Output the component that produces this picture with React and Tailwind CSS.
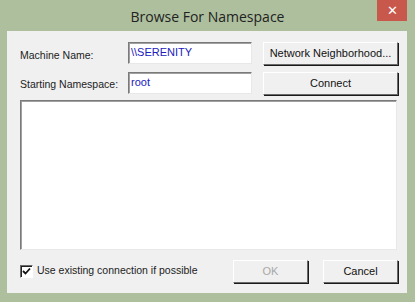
import React from 'react';

const raised =
  'border border-t-white border-l-white border-r-[#6a6a6a] border-b-[#6a6a6a] shadow-[1px_1px_0_#1a1a1a]';
const sunken =
  'border border-t-[#7a7a7a] border-l-[#7a7a7a] border-r-[#e8e8e8] border-b-[#e8e8e8] shadow-[inset_1px_1px_0_#a0a0a0]';

const Button = ({ children, disabled, className = '' }) => (
  <button
    disabled={disabled}
    className={`h-[23px] bg-[#f0f0f0] text-[11px] ${raised} ${
      disabled ? 'text-[#a8a8a8]' : 'text-[#111]'
    } ${className}`}
  >
    {children}
  </button>
);

const Field = ({ value }) => (
  <div
    className={`w-[124px] h-[22px] bg-white px-[2px] text-[11px] leading-[18px] text-[#2020c0] ${sunken}`}
  >
    {value}
  </div>
);

export default function App() {
  return (
    <div
      className="w-[415px] h-[302px] bg-[#adbf9d] flex flex-col"
      style={{ fontFamily: '"Liberation Sans", Arial, sans-serif' }}
    >
      <div className="relative h-[31px] flex items-center justify-center">
        <span className="text-[14px] text-[#222] pt-[1px]" style={{ fontFamily: '"Open Sans", "Noto Sans", sans-serif' }}>
          Browse For Namespace
        </span>
        <div className="absolute top-0 right-[8px] w-[30px] h-[21px] bg-[#c9584c] flex items-center justify-center text-white text-[13px] leading-none">
          ✕
        </div>
      </div>

      <div className="ml-[7px] mr-[8px] h-[262px] bg-[#f0f0f0] pl-[13px] pr-[9px] pt-[11px] flex flex-col">
        <div className="flex items-start h-[23px]">
          <span className="w-[108px] text-[10.5px] text-[#222] leading-[22px] pt-[2px]">Machine Name:</span>
          <Field value="\\SERENITY" />
          <Button className="ml-[11px] w-[135px]">Network Neighborhood...</Button>
        </div>
        <div className="flex items-start h-[23px] mt-[7px]">
          <span className="w-[108px] text-[10.5px] text-[#222] leading-[22px] pt-[1px]">Starting Namespace:</span>
          <Field value="root" />
          <Button className="ml-[11px] w-[135px]">Connect</Button>
        </div>

        <div className={`mt-[5px] mr-[1px] h-[150px] bg-white ${sunken}`} />

        <div className="flex items-center mt-[10px] h-[22px]">
          <div className="w-[13px] h-[13px] bg-white border border-t-[#6a6a6a] border-l-[#6a6a6a] border-r-white border-b-white shadow-[inset_1px_1px_0_#222] flex items-center justify-center">
            <svg width="9" height="9" viewBox="0 0 9 9">
              <path d="M1 4 L3.5 6.5 L8 1.5" fill="none" stroke="#111" strokeWidth="1.8" />
            </svg>
          </div>
          <span className="ml-[4px] text-[10.5px] text-[#222]">Use existing connection if possible</span>
          <div className="flex-1" />
          <Button disabled className="w-[75px] mr-[15px]">OK</Button>
          <Button className="w-[75px]">Cancel</Button>
        </div>
      </div>
    </div>
  );
}
